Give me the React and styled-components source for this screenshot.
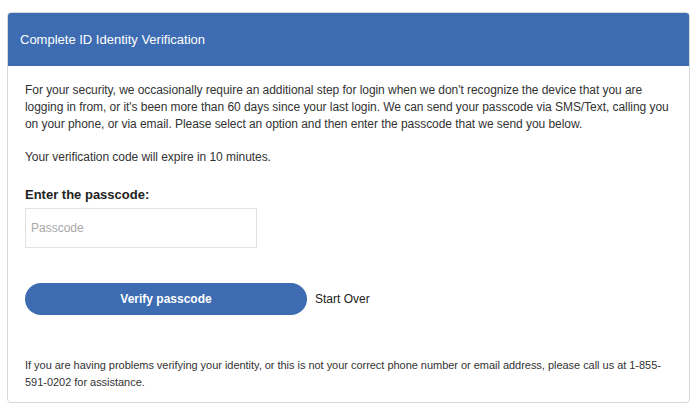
import React from "react";
import styled, { createGlobalStyle } from "styled-components";

const GlobalStyle = createGlobalStyle`
  body {
    margin: 0;
    background: #ffffff;
    font-family: "Liberation Sans", Arial, sans-serif;
  }
`;

const Page = styled.div`
  padding: 12px 10px 8px 7px;
`;

const Card = styled.div`
  width: 683px;
  height: 391px;
  box-sizing: border-box;
  border: 1px solid #d9d9d9;
  border-radius: 4px;
  overflow: hidden;
  display: flex;
  flex-direction: column;
`;

const Header = styled.div`
  height: 53px;
  background-color: #3d6cb2;
  color: #ffffff;
  font-size: 13px;
  display: flex;
  align-items: center;
  padding-left: 12px;
  flex-shrink: 0;
`;

const Body = styled.div`
  flex: 1;
  padding: 16px 16px 0 17px;
  display: flex;
  flex-direction: column;
  color: #333333;
`;

const Text = styled.p`
  margin: 0 0 ${(p) => p.$gap || 0}px;
  font-size: 12px;
  line-height: 17px;
  letter-spacing: -0.05px;
`;

const Label = styled.div`
  font-weight: bold;
  font-size: 13px;
  color: #222222;
  margin-bottom: 6px;
`;

const Input = styled.input`
  width: 232px;
  height: 40px;
  box-sizing: border-box;
  border: 1px solid #e2e2e2;
  padding: 0 5px;
  font-family: "Liberation Sans", Arial, sans-serif;
  font-size: 12px;
  color: #333;
  outline: none;
  &::placeholder {
    color: #a9a9a9;
  }
`;

const Actions = styled.div`
  display: flex;
  align-items: center;
  gap: 8px;
  margin-top: 35px;
`;

const VerifyButton = styled.button`
  width: 282px;
  height: 32px;
  border: none;
  border-radius: 16px;
  background-color: #3d6cb2;
  color: #ffffff;
  font-family: "Liberation Sans", Arial, sans-serif;
  font-size: 12px;
  font-weight: bold;
`;

const LinkText = styled.span`
  font-size: 12px;
  color: #222222;
`;

const Footer = styled.p`
  margin: auto -4px 11px 0;
  font-size: 11px;
  line-height: 17px;
  color: #333333;
  letter-spacing: -0.03px;
`;

export default function App() {
  return (
    <>
      <GlobalStyle />
      <Page>
        <Card>
          <Header>Complete ID Identity Verification</Header>
          <Body>
            <Text $gap={16}>
              For your security, we occasionally require an additional step for
              login when we don't recognize the device that you are logging in
              from, or it's been more than 60 days since your last login. We can
              send your passcode via SMS/Text, calling you on your phone, or via
              email. Please select an option and then enter the passcode that we
              send you below.
            </Text>
            <Text $gap={21}>Your verification code will expire in 10 minutes.</Text>
            <Label>Enter the passcode:</Label>
            <Input placeholder="Passcode" />
            <Actions>
              <VerifyButton>Verify passcode</VerifyButton>
              <LinkText>Start Over</LinkText>
            </Actions>
            <Footer>
              If you are having problems verifying your identity, or this is not
              your correct phone number or email address, please call us at
              1-855-591-0202 for assistance.
            </Footer>
          </Body>
        </Card>
      </Page>
    </>
  );
}
